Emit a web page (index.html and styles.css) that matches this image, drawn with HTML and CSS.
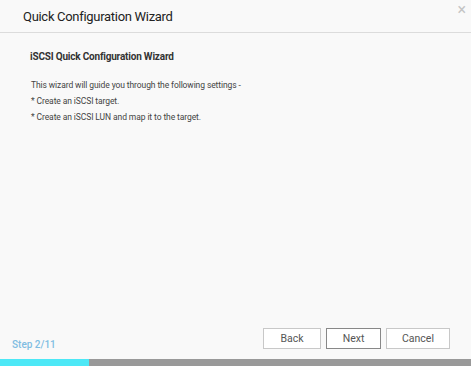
FILE: index.html
```html
<!DOCTYPE html>
<html>
  <head>
    <meta charset="UTF-8" />
    <title>Quick Configuration Wizard</title>
    <link rel="stylesheet" href="styles.css">
  </head>
  <body>
    <div class="dialog">
      <div class="header">
        <h1>Quick Configuration Wizard</h1>
        <span class="close">&times;</span>
      </div>

      <div class="content">
        <h2>iSCSI Quick Configuration Wizard</h2>
        <p>This wizard will guide you through the following settings -</p>
        <p>* Create an iSCSI target.</p>
        <p>* Create an iSCSI LUN and map it to the target.</p>
      </div>

      <div class="footer">
        <span class="step">Step 2/11</span>
        <div class="buttons">
          <button class="btn btn-back">Back</button>
          <button class="btn btn-focus">Next</button>
          <button class="btn btn-cancel">Cancel</button>
        </div>
      </div>

      <div class="progress">
        <div class="progress-fill"></div>
      </div>
    </div>
  </body>
</html>
```

FILE: styles.css
```css
body {
  margin: 0;
  font-family: Roboto, "Liberation Sans", Arial, sans-serif;
  background: #ffffff;
  color: #333;
}

.dialog {
  width: 471px;
  height: 366px;
  display: flex;
  flex-direction: column;
  background: #f9f9f9;
}

.header {
  height: 33px;
  border-bottom: 1px solid #dcdcdc;
  display: flex;
  align-items: center;
  justify-content: space-between;
  padding: 0 5px 0 23px;
  box-sizing: border-box;
}

h1 {
  margin: 1px 0 0;
  font-size: 13px;
  font-weight: 400;
  color: #222;
  letter-spacing: -0.3px;
}

.close {
  font-size: 16px;
  color: #c4c4c4;
  margin-top: -13px;
}

.content {
  flex: 1;
  padding: 18px 31px 0;
}

h2 {
  margin: 0 0 15px -1px;
  font-size: 10px;
  font-weight: 700;
  color: #333;
  letter-spacing: -0.2px;
}

.content p {
  margin: 0;
  font-size: 8.5px;
  line-height: 16px;
  color: #444;
  letter-spacing: -0.1px;
}

.footer {
  display: flex;
  align-items: flex-end;
  justify-content: space-between;
  padding: 0 21px 10px 12px;
}

.step {
  font-size: 10px;
  font-weight: 500;
  color: #7fbde2;
  margin-bottom: -1px;
}

.buttons {
  display: flex;
  gap: 5px;
}

.btn {
  height: 21px;
  padding: 0 12px;
  background: #fff;
  border: 1px solid #c8c8c8;
  font-family: inherit;
  font-size: 10.5px;
  color: #555;
}

.btn-back {
  min-width: 58px;
}

.btn-focus {
  min-width: 55px;
  border-color: #888;
}

.btn-cancel {
  min-width: 64px;
}

.progress {
  height: 7px;
  background: #999;
}

.progress-fill {
  width: 89px;
  height: 100%;
  background: #4de8f6;
}
```
